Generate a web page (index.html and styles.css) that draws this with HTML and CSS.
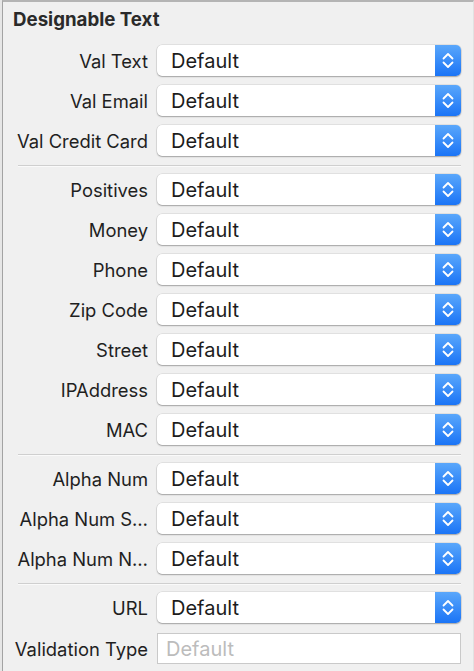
FILE: index.html
```html
<!DOCTYPE html>
<html>
<head>
<meta charset="utf-8">
<link rel="stylesheet" href="styles.css">
</head>
<body>
<div class="panel">
  <div class="title">Designable Text</div>
  <div class="form">
    <div class="row"><div class="label">Val Text</div><div class="popup"><span class="value">Default</span><span class="stepper"><svg viewBox="0 0 26 31" width="26" height="31"><path d="M8.5 13.5 L13 9 L17.5 13.5 M8.5 17.5 L13 22 L17.5 17.5" fill="none" stroke="#fff" stroke-width="1.8" stroke-linecap="round" stroke-linejoin="round"/></svg></span></div></div>
    <div class="row"><div class="label">Val Email</div><div class="popup"><span class="value">Default</span><span class="stepper"><svg viewBox="0 0 26 31" width="26" height="31"><path d="M8.5 13.5 L13 9 L17.5 13.5 M8.5 17.5 L13 22 L17.5 17.5" fill="none" stroke="#fff" stroke-width="1.8" stroke-linecap="round" stroke-linejoin="round"/></svg></span></div></div>
    <div class="row"><div class="label">Val Credit Card</div><div class="popup"><span class="value">Default</span><span class="stepper"><svg viewBox="0 0 26 31" width="26" height="31"><path d="M8.5 13.5 L13 9 L17.5 13.5 M8.5 17.5 L13 22 L17.5 17.5" fill="none" stroke="#fff" stroke-width="1.8" stroke-linecap="round" stroke-linejoin="round"/></svg></span></div></div>
    <div class="sep"></div>
    <div class="row"><div class="label">Positives</div><div class="popup"><span class="value">Default</span><span class="stepper"><svg viewBox="0 0 26 31" width="26" height="31"><path d="M8.5 13.5 L13 9 L17.5 13.5 M8.5 17.5 L13 22 L17.5 17.5" fill="none" stroke="#fff" stroke-width="1.8" stroke-linecap="round" stroke-linejoin="round"/></svg></span></div></div>
    <div class="row"><div class="label">Money</div><div class="popup"><span class="value">Default</span><span class="stepper"><svg viewBox="0 0 26 31" width="26" height="31"><path d="M8.5 13.5 L13 9 L17.5 13.5 M8.5 17.5 L13 22 L17.5 17.5" fill="none" stroke="#fff" stroke-width="1.8" stroke-linecap="round" stroke-linejoin="round"/></svg></span></div></div>
    <div class="row"><div class="label">Phone</div><div class="popup"><span class="value">Default</span><span class="stepper"><svg viewBox="0 0 26 31" width="26" height="31"><path d="M8.5 13.5 L13 9 L17.5 13.5 M8.5 17.5 L13 22 L17.5 17.5" fill="none" stroke="#fff" stroke-width="1.8" stroke-linecap="round" stroke-linejoin="round"/></svg></span></div></div>
    <div class="row"><div class="label">Zip Code</div><div class="popup"><span class="value">Default</span><span class="stepper"><svg viewBox="0 0 26 31" width="26" height="31"><path d="M8.5 13.5 L13 9 L17.5 13.5 M8.5 17.5 L13 22 L17.5 17.5" fill="none" stroke="#fff" stroke-width="1.8" stroke-linecap="round" stroke-linejoin="round"/></svg></span></div></div>
    <div class="row"><div class="label">Street</div><div class="popup"><span class="value">Default</span><span class="stepper"><svg viewBox="0 0 26 31" width="26" height="31"><path d="M8.5 13.5 L13 9 L17.5 13.5 M8.5 17.5 L13 22 L17.5 17.5" fill="none" stroke="#fff" stroke-width="1.8" stroke-linecap="round" stroke-linejoin="round"/></svg></span></div></div>
    <div class="row"><div class="label">IPAddress</div><div class="popup"><span class="value">Default</span><span class="stepper"><svg viewBox="0 0 26 31" width="26" height="31"><path d="M8.5 13.5 L13 9 L17.5 13.5 M8.5 17.5 L13 22 L17.5 17.5" fill="none" stroke="#fff" stroke-width="1.8" stroke-linecap="round" stroke-linejoin="round"/></svg></span></div></div>
    <div class="row"><div class="label">MAC</div><div class="popup"><span class="value">Default</span><span class="stepper"><svg viewBox="0 0 26 31" width="26" height="31"><path d="M8.5 13.5 L13 9 L17.5 13.5 M8.5 17.5 L13 22 L17.5 17.5" fill="none" stroke="#fff" stroke-width="1.8" stroke-linecap="round" stroke-linejoin="round"/></svg></span></div></div>
    <div class="sep"></div>
    <div class="row"><div class="label">Alpha Num</div><div class="popup"><span class="value">Default</span><span class="stepper"><svg viewBox="0 0 26 31" width="26" height="31"><path d="M8.5 13.5 L13 9 L17.5 13.5 M8.5 17.5 L13 22 L17.5 17.5" fill="none" stroke="#fff" stroke-width="1.8" stroke-linecap="round" stroke-linejoin="round"/></svg></span></div></div>
    <div class="row"><div class="label">Alpha Num S…</div><div class="popup"><span class="value">Default</span><span class="stepper"><svg viewBox="0 0 26 31" width="26" height="31"><path d="M8.5 13.5 L13 9 L17.5 13.5 M8.5 17.5 L13 22 L17.5 17.5" fill="none" stroke="#fff" stroke-width="1.8" stroke-linecap="round" stroke-linejoin="round"/></svg></span></div></div>
    <div class="row"><div class="label">Alpha Num N…</div><div class="popup"><span class="value">Default</span><span class="stepper"><svg viewBox="0 0 26 31" width="26" height="31"><path d="M8.5 13.5 L13 9 L17.5 13.5 M8.5 17.5 L13 22 L17.5 17.5" fill="none" stroke="#fff" stroke-width="1.8" stroke-linecap="round" stroke-linejoin="round"/></svg></span></div></div>
    <div class="sep"></div>
    <div class="row"><div class="label">URL</div><div class="popup"><span class="value">Default</span><span class="stepper"><svg viewBox="0 0 26 31" width="26" height="31"><path d="M8.5 13.5 L13 9 L17.5 13.5 M8.5 17.5 L13 22 L17.5 17.5" fill="none" stroke="#fff" stroke-width="1.8" stroke-linecap="round" stroke-linejoin="round"/></svg></span></div></div>
    <div class="row row-field"><div class="label">Validation Type</div><div class="field">Default</div></div>
  </div>
</div>
</body>
</html>
```

FILE: styles.css
```css
html, body {
  margin: 0;
  padding: 0;
  background: #e6e6e6;
}
body {
  width: 474px;
  height: 671px;
  overflow: hidden;
  font-family: Inter, "Liberation Sans", sans-serif;
  color: #1f1f1f;
}
.panel {
  margin-left: 2px;
  height: 669px;
  background: #f0f0f0;
  border-left: 1px solid #a3a3a3;
  border-top: 2px solid #b4b4b4;
  border-right: 1px solid #e2e2e2;
}
.title {
  font-weight: 700;
  font-size: 18.7px;
  line-height: 22px;
  padding: 7px 0 0 10px;
  color: #2a2a2a;
}
.form {
  display: flex;
  flex-direction: column;
  padding-top: 14px;
  padding-right: 12px;
}
.row {
  display: flex;
  align-items: center;
  height: 31px;
}
.row + .row {
  margin-top: 9px;
}
.row-field {
  margin-top: 10px !important;
}
.label {
  width: 145px;
  text-align: right;
  padding-right: 9px;
  font-size: 18.4px;
  white-space: nowrap;
  color: #1f1f1f;
}
.popup {
  flex: 1;
  height: 31px;
  display: flex;
  align-items: center;
  background: #fff;
  border-radius: 5px;
  box-shadow: 0 0 0 0.5px rgba(0, 0, 0, 0.12), 0 1px 1.5px rgba(0, 0, 0, 0.28);
  overflow: hidden;
}
.value {
  flex: 1;
  padding-left: 14px;
  font-size: 20px;
  color: #1c1c1c;
}
.stepper {
  width: 26px;
  height: 31px;
  background: linear-gradient(#5aa7fb, #1a74f6);
  display: flex;
}
.sep {
  height: 1px;
  background: #cfcfcf;
  margin: 9px 0 7px 15px;
  border-bottom: 1px solid #fafafa;
}
.field {
  flex: 1;
  height: 29px;
  background: #fff;
  border: 1px solid #c9c9c9;
  box-sizing: content-box;
  font-size: 20px;
  color: #bcbcbc;
  padding-left: 8px;
  display: flex;
  align-items: center;
}
```
